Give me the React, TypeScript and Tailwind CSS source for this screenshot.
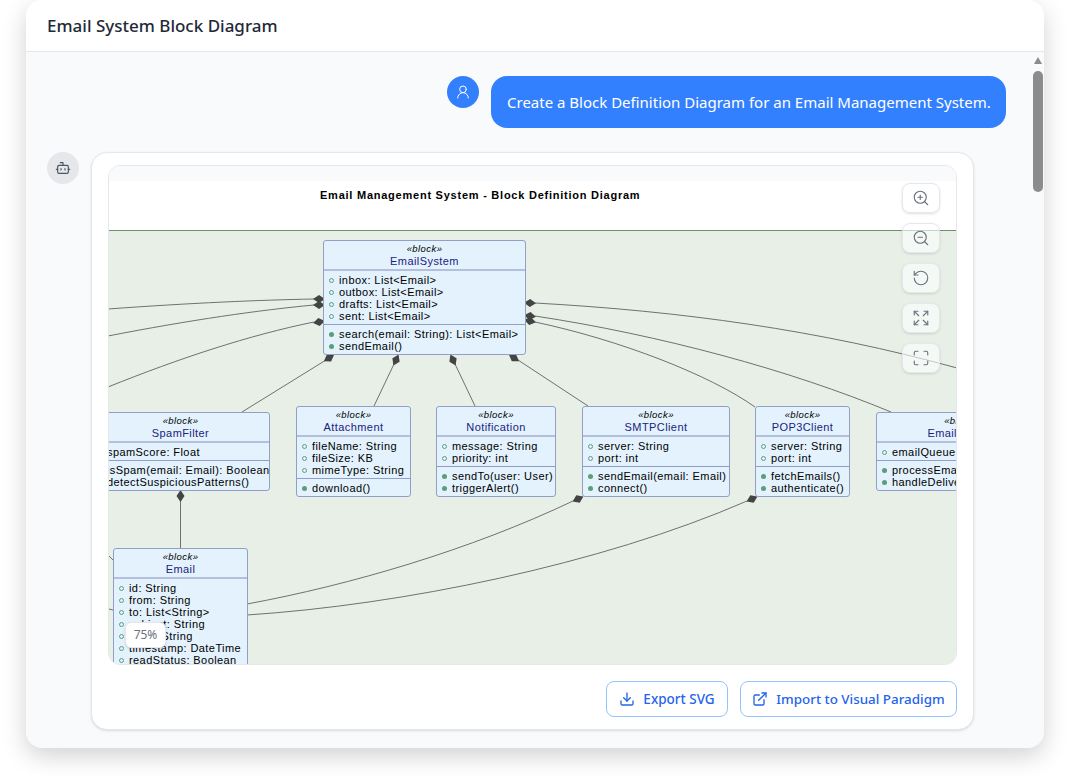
import { Bot, Download, Expand, ExternalLink, Maximize, RotateCcw, UserRound, ZoomIn, ZoomOut } from "lucide-react";

// page coords of the diagram canvas origin
const OX = 109;
const OY = 166;

type BlockProps = {
  x: number;
  y: number;
  w: number;
  name: string;
  attrs: string[];
  methods: string[];
};

const blocks: BlockProps[] = [
  {
    x: 323,
    y: 240,
    w: 203,
    name: "EmailSystem",
    attrs: ["inbox: List<Email>", "outbox: List<Email>", "drafts: List<Email>", "sent: List<Email>"],
    methods: ["search(email: String): List<Email>", "sendEmail()"],
  },
  {
    x: 91,
    y: 412,
    w: 179,
    name: "SpamFilter",
    attrs: ["spamScore: Float"],
    methods: ["isSpam(email: Email): Boolean", "detectSuspiciousPatterns()"],
  },
  {
    x: 296,
    y: 406,
    w: 115,
    name: "Attachment",
    attrs: ["fileName: String", "fileSize: KB", "mimeType: String"],
    methods: ["download()"],
  },
  {
    x: 436,
    y: 406,
    w: 120,
    name: "Notification",
    attrs: ["message: String", "priority: int"],
    methods: ["sendTo(user: User)", "triggerAlert()"],
  },
  {
    x: 582,
    y: 406,
    w: 148,
    name: "SMTPClient",
    attrs: ["server: String", "port: int"],
    methods: ["sendEmail(email: Email)", "connect()"],
  },
  {
    x: 755,
    y: 406,
    w: 95,
    name: "POP3Client",
    attrs: ["server: String", "port: int"],
    methods: ["fetchEmails()", "authenticate()"],
  },
  {
    x: 876,
    y: 412,
    w: 172,
    name: "EmailService",
    attrs: ["emailQueue: List<Email>"],
    methods: ["processEmail()", "handleDelivery()"],
  },
  {
    x: 113,
    y: 548,
    w: 135,
    name: "Email",
    attrs: [
      "id: String",
      "from: String",
      "to: List<String>",
      "subject: String",
      "body: String",
      "timestamp: DateTime",
      "readStatus: Boolean",
    ],
    methods: [],
  },
];

const edges = [
  "M108 309 C 190 303, 260 300, 314 299",
  "M108 336 C 190 320, 260 310, 314 305",
  "M108 387 C 180 358, 250 335, 314 322",
  "M326 360 L242 412",
  "M394 364 L374 406",
  "M455 364 L475 406",
  "M518 360 L588 406",
  "M535 303 C 680 311, 820 330, 957 368",
  "M535 316 C 660 335, 790 370, 891 412",
  "M535 322 C 620 340, 710 375, 755 407",
  "M180.5 501 L180.5 548",
  "M573 501 C 470 550, 350 585, 247 604",
  "M747 501 C 600 565, 400 605, 247 615",
  "M109 556 L113 560",
  "M109 609 L113 610",
];

const diamonds = [
  { x: 319, y: 299, r: 0 },
  { x: 319, y: 305, r: 0 },
  { x: 319, y: 322, r: -10 },
  { x: 329, y: 358, r: -32 },
  { x: 396, y: 360, r: -64 },
  { x: 453, y: 360, r: 64 },
  { x: 514, y: 358, r: 33 },
  { x: 530, y: 303, r: 3 },
  { x: 530, y: 316, r: 8 },
  { x: 530, y: 321, r: 12 },
  { x: 180.5, y: 496, r: 90 },
  { x: 578, y: 499, r: -25 },
  { x: 752, y: 499, r: -25 },
];

function Block({ x, y, w, name, attrs, methods }: BlockProps) {
  return (
    <div
      className="absolute rounded-[3px] border border-[#8f9fc8] bg-[#e3f2fd] text-[11px] leading-[12px] tracking-[0.42px] text-black"
      style={{ left: x - OX, top: y - OY, width: w }}
    >
      <div className="h-[30px] border-b-2 border-[#b3bfdc] pt-[2px] text-center">
        <div className="text-[9.5px] italic leading-[11px] text-black">«block»</div>
        <div className="leading-[14px] text-[#1a237e]">{name}</div>
      </div>
      <div className={methods.length ? "border-b border-[#8f9fc8] pb-[2px] pt-[3px]" : "py-[3px]"}>
        {attrs.map((a) => (
          <div key={a} className="flex h-[12px] items-center whitespace-nowrap pl-[5px]">
            <span className="mr-[5px] h-[5px] w-[5px] shrink-0 rounded-full border border-[#5a9e82]" />
            {a}
          </div>
        ))}
      </div>
      {methods.length > 0 && (
        <div className="pb-[2px] pt-[3px]">
          {methods.map((m) => (
            <div key={m} className="flex h-[12px] items-center whitespace-nowrap pl-[5px]">
              <span className="mr-[5px] h-[5px] w-[5px] shrink-0 rounded-full bg-[#5a9e7a]" />
              {m}
            </div>
          ))}
        </div>
      )}
    </div>
  );
}

function ToolButton({ children }: { children: React.ReactNode }) {
  return (
    <div className="flex h-[30px] w-[38px] items-center justify-center rounded-lg border border-[#e5e7eb] bg-white/60 text-[#6b7280] shadow-sm">
      {children}
    </div>
  );
}

function Diagram() {
  return (
    <div className="relative h-[500px] overflow-hidden rounded-xl border border-[#e5e7eb] bg-white font-['Liberation_Sans',Arial,sans-serif]">
      <div className="h-[15px] bg-[#f9fafb]" />
      <div className="h-[50px] border-b border-[#6f8f6f] bg-white pt-[7px] pl-[211px] text-[11px] font-bold leading-[14px] tracking-[0.76px] text-black">
        Email Management System - Block Definition Diagram
      </div>
      <div className="h-[434px] bg-[#e7efe7]" />

      <svg className="absolute left-0 top-0" width="849" height="500" viewBox={`${OX} ${OY} 849 500`} fill="none">
        {edges.map((d) => (
          <path key={d} d={d} stroke="#707070" strokeWidth="1" />
        ))}
        {diamonds.map((m, i) => (
          <polygon
            key={i}
            points="-6,0 0,-4 6,0 0,4"
            fill="#444"
            transform={`translate(${m.x} ${m.y}) rotate(${m.r})`}
          />
        ))}
      </svg>

      {blocks.map((b) => (
        <Block key={b.name} {...b} />
      ))}

      <div className="absolute left-[793px] top-[17px] flex flex-col gap-[10px]">
        <ToolButton><ZoomIn size={18} strokeWidth={1.5} /></ToolButton>
        <ToolButton><ZoomOut size={18} strokeWidth={1.5} /></ToolButton>
        <ToolButton><RotateCcw size={18} strokeWidth={1.5} /></ToolButton>
        <ToolButton><Expand size={18} strokeWidth={1.5} /></ToolButton>
        <ToolButton><Maximize size={18} strokeWidth={1.5} /></ToolButton>
      </div>

      <div className="absolute left-[16px] top-[456px] flex h-[26px] w-[41px] items-center justify-center rounded-md border border-[#e5e7eb] bg-white font-['Noto_Sans',sans-serif] text-xs text-[#6b7280] shadow-sm">
        75%
      </div>
    </div>
  );
}

export default function App() {
  return (
    <div className="h-[776px] overflow-hidden bg-white font-['Noto_Sans',sans-serif]">
      <div className="ml-[26px] flex h-[748px] w-[1018px] flex-col overflow-hidden rounded-2xl bg-[#f9fafb] shadow-[0_8px_24px_rgba(0,0,0,0.18)]">
        <header className="flex h-[52px] shrink-0 items-center border-b border-[#e5e7eb] bg-white pl-[21px]">
          <h1 className="text-[17px] font-medium text-[#1f2937]">Email System Block Diagram</h1>
        </header>

        <div className="flex min-h-0 flex-1">
          <main className="min-w-0 flex-1 pt-[24px]">
            <div className="flex justify-end gap-3 pr-[27px]">
              <div className="flex h-8 w-8 items-center justify-center rounded-full bg-[#3380ff] text-white">
                <UserRound size={16} strokeWidth={1.5} />
              </div>
              <div className="flex h-[52px] w-[515px] items-center rounded-2xl bg-[#3380ff] pl-4 text-[15px] text-white">
                Create a Block Definition Diagram for an Email Management System.
              </div>
            </div>

            <div className="mt-[24px] flex gap-3 pl-[21px]">
              <div className="flex h-8 w-8 shrink-0 items-center justify-center rounded-full bg-[#e5e7eb] text-[#4b5563]">
                <Bot size={16} strokeWidth={1.75} />
              </div>
              <div className="h-[578px] w-[883px] rounded-2xl border border-[#e5e7eb] bg-white px-4 pt-3 shadow-sm">
                <Diagram />
                <div className="mt-4 flex justify-end gap-3">
                  <button type="button" className="flex h-[36px] w-[122px] items-center justify-center gap-2 rounded-lg border border-[#93c5fd] text-[13.5px] font-medium text-[#2563eb]">
                    <Download size={16} />
                    Export SVG
                  </button>
                  <button type="button" className="flex h-[36px] w-[217px] items-center justify-center gap-2 rounded-lg border border-[#93c5fd] text-[13.4px] font-medium text-[#2563eb]">
                    <ExternalLink size={16} />
                    Import to Visual Paradigm
                  </button>
                </div>
              </div>
            </div>
          </main>

          <div className="w-[11px] shrink-0 pr-px pt-[5px]">
            <div className="mx-auto h-0 w-0 border-x-[4px] border-b-[7px] border-x-transparent border-b-[#8c8c8c]" />
            <div className="mt-[7px] h-[121px] rounded-full bg-[#8c8c8c]" />
          </div>
        </div>
      </div>
    </div>
  );
}
